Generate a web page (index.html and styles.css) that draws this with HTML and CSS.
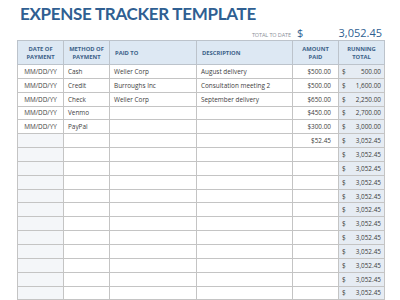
FILE: index.html
```html
<!DOCTYPE html>
<html lang="en">
<head>
    <meta charset="UTF-8">
    <title>Expense Tracker Template</title>
    <link rel="stylesheet" href="styles.css">
</head>
<body>
    <div class="sheet">
        <h1 class="title">EXPENSE TRACKER TEMPLATE</h1>
        <div class="total-line">
            <span class="total-label">TOTAL TO DATE</span>
            <span class="total-sign">$</span>
            <span class="total-value">3,052.45</span>
        </div>
        <table class="tracker">
            <colgroup>
                <col class="c-date">
                <col class="c-method">
                <col class="c-paid">
                <col class="c-desc">
                <col class="c-amount">
                <col class="c-running">
            </colgroup>
            <thead>
                <tr>
                    <th class="center">DATE OF<br>PAYMENT</th>
                    <th class="center">METHOD OF<br>PAYMENT</th>
                    <th>PAID TO</th>
                    <th>DESCRIPTION</th>
                    <th class="center">AMOUNT<br>PAID</th>
                    <th class="center">RUNNING<br>TOTAL</th>
                </tr>
            </thead>
            <tbody id="rows">
                <tr>
                    <td class="date">MM/DD/YY</td><td>Cash</td><td>Weller Corp</td><td>August delivery</td>
                    <td class="amount">$500.00</td><td class="running"><span>$</span><span>500.00</span></td>
                </tr>
                <tr>
                    <td class="date">MM/DD/YY</td><td>Credit</td><td>Burroughs Inc</td><td>Consultation meeting 2</td>
                    <td class="amount">$500.00</td><td class="running"><span>$</span><span>1,600.00</span></td>
                </tr>
                <tr>
                    <td class="date">MM/DD/YY</td><td>Check</td><td>Weller Corp</td><td>September delivery</td>
                    <td class="amount">$650.00</td><td class="running"><span>$</span><span>2,250.00</span></td>
                </tr>
                <tr>
                    <td class="date">MM/DD/YY</td><td>Venmo</td><td></td><td></td>
                    <td class="amount">$450.00</td><td class="running"><span>$</span><span>2,700.00</span></td>
                </tr>
                <tr>
                    <td class="date">MM/DD/YY</td><td>PayPal</td><td></td><td></td>
                    <td class="amount">$300.00</td><td class="running"><span>$</span><span>3,000.00</span></td>
                </tr>
                <tr>
                    <td class="date empty"></td><td></td><td></td><td></td>
                    <td class="amount">$52.45</td><td class="running"><span>$</span><span>3,052.45</span></td>
                </tr>
            </tbody>
        </table>
    </div>
    <script>
        // fill the remaining blank rows of the sheet
        const body = document.getElementById('rows');
        for (let i = 0; i < 11; i++) {
            const row = body.insertRow();
            row.innerHTML = '<td class="date empty"></td><td></td><td></td><td></td><td class="amount"></td>' +
                '<td class="running"><span>$</span><span>3,052.45</span></td>';
        }
    </script>
</body>
</html>
```

FILE: styles.css
```css
body {
    margin: 0;
    background-color: #ffffff;
    font-family: "Open Sans", "DejaVu Sans", sans-serif;
    overflow: hidden;
}
.sheet {
    padding: 3px 16px 0 17px;
}
.title {
    margin: 0 0 0 3px;
    font-family: Lato, "Open Sans", sans-serif;
    font-weight: 700;
    font-size: 17px;
    line-height: 22px;
    letter-spacing: -0.3px;
    color: #2f5f92;
}
.total-line {
    display: flex;
    align-items: baseline;
    height: 15px;
    padding-right: 2px;
}
.total-label {
    margin-left: auto;
    font-size: 5.5px;
    color: #8a9099;
    letter-spacing: -0.1px;
}
.total-sign {
    margin-left: 6px;
    width: 40px;
    font-size: 11px;
    color: #2f5f92;
}
.total-value {
    width: 45px;
    text-align: right;
    font-size: 11px;
    color: #2f5f92;
}
.tracker {
    width: 367px;
    border-collapse: collapse;
    table-layout: fixed;
    font-size: 6.4px;
    color: #3d3d3d;
}
.c-date { width: 46px; }
.c-method { width: 46px; }
.c-paid { width: 87px; }
.c-desc { width: 96px; }
.c-amount { width: 46px; }
.c-running { width: 46px; }
.tracker th {
    height: 23px;
    padding: 0 5px;
    background-color: #dde8f3;
    border: 1px solid #bcc3cb;
    color: #3b6188;
    font-size: 5.8px;
    font-weight: 700;
    line-height: 8px;
    text-align: left;
}
.tracker th.center {
    text-align: center;
}
.tracker td {
    height: 12.85px;
    padding: 0 4px;
    border: 1px solid #c4c4c4;
    white-space: nowrap;
    overflow: hidden;
}
.tracker td.date {
    text-align: center;
}
.tracker td.empty {
    background-color: #f4f6f9;
}
.tracker td.amount {
    text-align: right;
    padding-right: 7px;
}
.tracker td.running {
    background-color: #e6ecf3;
    padding: 0 3px 0 3px;
}
.running span:first-child {
    float: left;
}
.running span:last-child {
    float: right;
}
```
